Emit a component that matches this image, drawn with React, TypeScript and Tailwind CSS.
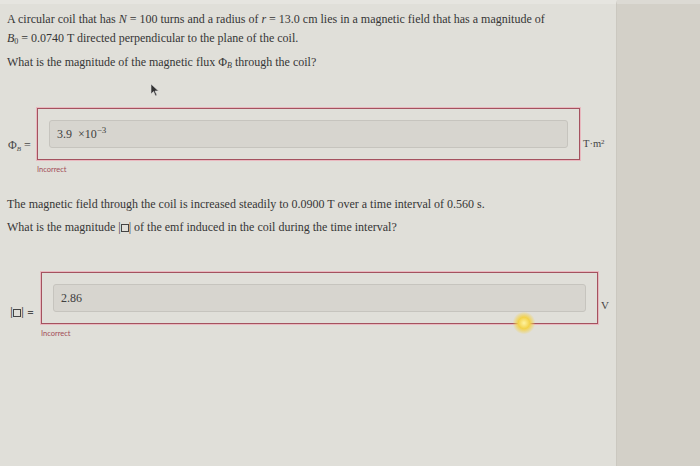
import React from 'react';

const serif = { fontFamily: '"Liberation Serif", "DejaVu Serif", serif' };

const Incorrect = () => (
  <div className="text-[7.5px] leading-none text-[#a24c58] font-['Lato',sans-serif] pt-[7px]">Incorrect</div>
);

const AnswerRow = ({
  label,
  value,
  unit,
  boxClass,
  labelClass,
  unitClass,
}: {
  label: React.ReactNode;
  value: React.ReactNode;
  unit: React.ReactNode;
  boxClass: string;
  labelClass: string;
  unitClass: string;
}) => (
  <div className="flex items-start">
    <div className={`shrink-0 text-[12px] text-[#4a4a4a] ${labelClass}`}>{label}</div>
    <div>
      <div className={`flex items-center ${boxClass}`}>
        <div className="border-[1.5px] border-[#a4525f] shadow-[0_0_0_1px_#e9b8bf] p-[11px] w-full">
          <div className="h-[28px] rounded-[3px] border border-[#c6c4be] bg-[#d7d5cf] flex items-center px-[7px] text-[12px] text-[#404040]">
            {value}
          </div>
        </div>
      </div>
      <Incorrect />
    </div>
    <div className={`pl-[3px] text-[10.5px] text-[#444] ${unitClass}`}>{unit}</div>
  </div>
);

export default function App() {
  return (
    <div className="w-[700px] h-[466px] flex bg-[#dedcd6] overflow-hidden" style={serif}>
      <div className="relative w-[617px] shrink-0 border-r border-[#cbc8c0] border-t-[4px] border-t-[#e6e5e0] bg-[#e0dfd9]">
        <div className="pl-[7px] pt-[6px] text-[12px] text-[#363636] leading-[19px]">
          <p>
            A circular coil that has <i>N</i> = 100 turns and a radius of <i>r</i> = 13.0 cm lies in a magnetic field that has a magnitude of
          </p>
          <p>
            <i>B</i>
            <sub className="text-[8px]">0</sub> = 0.0740 T directed perpendicular to the plane of the coil.
          </p>
          <p className="mt-[5px]">
            What is the magnitude of the magnetic flux Φ<sub className="text-[8px] italic">B</sub> through the coil?
          </p>
        </div>

        <div className="mt-[36px]">
          <AnswerRow
            label={
              <span>
                Φ<sub className="text-[7px] italic">B</sub> =
              </span>
            }
            labelClass="w-[37px] pl-[8px] pt-[28px]"
            unitClass="pt-[28px]"
            boxClass="w-[543px] h-[51px]"
            value={
              <span>
                3.9&nbsp;&nbsp;×10<sup className="text-[9px]">−3</sup>
              </span>
            }
            unit={
              <span>
                T·m<sup className="text-[7px]">2</sup>
              </span>
            }
          />
        </div>

        <div className="pl-[7px] mt-[21px] text-[12px] text-[#363636] leading-[19px]">
          <p>The magnetic field through the coil is increased steadily to 0.0900 T over a time interval of 0.560 s.</p>
          <p className="mt-[4px]">
            What is the magnitude |<span className="inline-block w-[8px] h-[8px] border border-[#444] align-[-1px]" />| of the emf induced in the coil during the time interval?
          </p>
        </div>

        <div className="mt-[36px]">
          <AnswerRow
            label={
              <span className="font-['Lato',sans-serif]">
                |<span className="inline-block w-[8px] h-[8px] border border-[#444] align-[-1px]" />| =
              </span>
            }
            labelClass="w-[41px] pl-[10px] pt-[30px]"
            unitClass="pt-[24px]"
            boxClass="w-[557px] h-[50px]"
            value="2.86"
            unit={<span className="text-[11px]">V</span>}
          />
        </div>

        <svg className="absolute left-[150px] top-[79px]" width="10" height="14" viewBox="0 0 10 14">
          <path d="M1 1 L1 11 L3.5 8.5 L5.5 13 L7 12.3 L5 8 L8.5 8 Z" fill="#333" stroke="#ddd" strokeWidth="0.6" />
        </svg>
        <div className="absolute left-[512px] top-[308px] w-[24px] h-[22px] rounded-full bg-[radial-gradient(circle,#fff3a0_0%,#f3d24a_35%,rgba(240,210,120,0)_70%)]" />
      </div>
      <div className="flex-1 bg-[#d3d0c8] border-t-[4px] border-t-[#dcdad4]" />
    </div>
  );
}
